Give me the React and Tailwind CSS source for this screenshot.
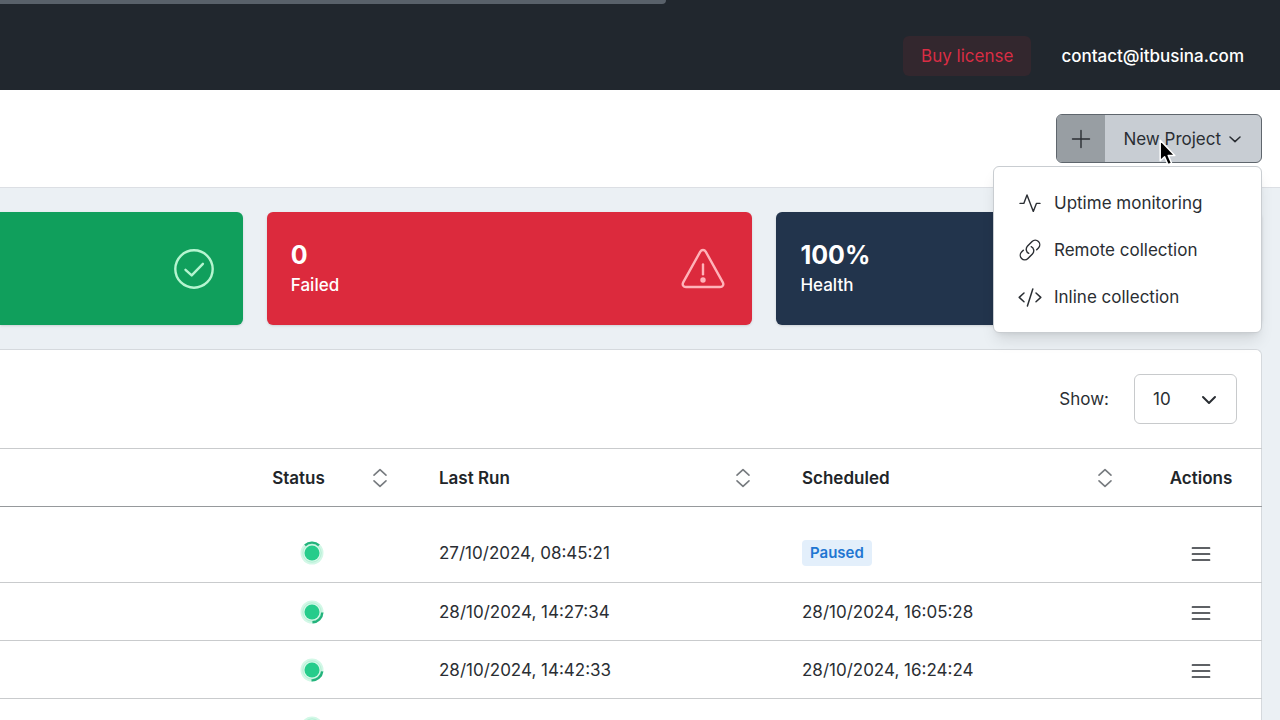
import { useState } from 'react';

const projects = [
  { lastRun: '27/10/2024, 08:45:21', scheduled: null, spin: 0 },
  { lastRun: '28/10/2024, 14:27:34', scheduled: '28/10/2024, 16:05:28', spin: 135 },
  { lastRun: '28/10/2024, 14:42:33', scheduled: '28/10/2024, 16:24:24', spin: 140 },
  { lastRun: '28/10/2024, 16:17:18', scheduled: '28/10/2024, 17:17:20', spin: 180 },
];

function Icon({ size = 24, stroke = 1.5, viewBox = '0 0 24 24', className, children }) {
  return (
    <svg
      width={size}
      height={size}
      viewBox={viewBox}
      fill="none"
      stroke="currentColor"
      strokeWidth={stroke}
      strokeLinecap="round"
      strokeLinejoin="round"
      className={className}
      aria-hidden="true"
    >
      {children}
    </svg>
  );
}

function SortIcon() {
  return (
    <Icon size={22} viewBox="0 0 22 22" stroke={1.6} className="shrink-0 text-[#777b7f]">
      <path d="M5 8.2 11 2.6l6 5.6M5 13.8l6 5.6 6-5.6" />
    </Icon>
  );
}

function StatusDot({ spin }) {
  return (
    <svg width="26" height="26" viewBox="0 0 26 26" className="mx-auto" role="img" aria-label="Success">
      <circle cx="13" cy="13" r="11.5" fill="#d3f8e7" />
      <circle cx="13" cy="13" r="9.2" fill="none" stroke="#b4efd5" strokeWidth="1" />
      <circle cx="13" cy="13" r="7.5" fill="#26cc8b" />
      <path
        d="M6 5.4a10.3 10.3 0 0 1 14 0"
        fill="none"
        stroke="#23b37c"
        strokeWidth="2.4"
        transform={`rotate(${spin} 13 13)`}
      />
    </svg>
  );
}

function StatCard({ value, label, color, children }) {
  return (
    <div className={`flex items-center justify-between rounded-md px-6 h-[113px] shadow-sm ${color}`}>
      <div className="text-white">
        <div className="text-[25px] leading-8 font-bold">{value}</div>
        <div className="text-[17px] leading-7 font-medium">{label}</div>
      </div>
      {children}
    </div>
  );
}

function MenuItem({ label, children }) {
  return (
    <button type="button" role="menuitem" className="flex w-full items-center gap-3 px-6 h-[47px] text-left hover:bg-gray-50">
      {children}
      {label}
    </button>
  );
}

function NewProject() {
  const [open, setOpen] = useState(true);

  return (
    <div className="relative">
      <div className="flex h-[49px] overflow-hidden rounded-md border border-[#5f666d] bg-[#c8cdd3]">
        <button type="button" aria-label="Add" className="flex w-12 items-center justify-center bg-[#989ea3]">
          <Icon size={24} stroke={1.4}>
            <path d="M12 3.5v17M3.5 12h17" />
          </Icon>
        </button>
        <button
          type="button"
          aria-expanded={open}
          onClick={() => setOpen(!open)}
          className="flex items-center gap-2 pl-[18px] pr-5"
        >
          New Project
          <Icon size={12} stroke={1.5} viewBox="0 0 12 12">
            <path d="M1 4l5 4.6L11 4" />
          </Icon>
        </button>
      </div>

      {open && (
        <div role="menu" className="absolute right-0 top-[52px] z-10 w-[269px] rounded-md border border-[#c9cdd1] bg-white py-3 shadow-lg">
          <MenuItem label="Uptime monitoring">
            <Icon stroke={1.4}>
              <path d="M2 12.4h3.8L9 4l6.3 16.4 3.1-8H22" />
            </Icon>
          </MenuItem>
          <MenuItem label="Remote collection">
            <Icon stroke={1.4}>
              <path d="M13.19 8.688a4.5 4.5 0 0 1 1.242 7.244l-4.5 4.5a4.5 4.5 0 0 1-6.364-6.364l1.757-1.757m13.35-.622 1.757-1.757a4.5 4.5 0 0 0-6.364-6.364l-4.5 4.5a4.5 4.5 0 0 0 1.242 7.244" />
            </Icon>
          </MenuItem>
          <MenuItem label="Inline collection">
            <Icon stroke={1.5}>
              <path d="M18 8l4.8 4.4L18 16.8M6 8l-4.8 4.4L6 16.8M14.8 4 9.4 21" />
            </Icon>
          </MenuItem>
        </div>
      )}

      {/* Pointer */}
      <svg width="18" height="28" viewBox="0 0 18 28" className="pointer-events-none absolute left-[103px] top-[25px] z-20" aria-hidden="true">
        <path
          d="M1.2 1.2v20.6l4.4-4.1 3.4 8 3.6-1.5-3.4-7.8h6.6z"
          fill="#000"
          stroke="#fff"
          strokeWidth="1.5"
          strokeLinejoin="round"
        />
      </svg>
    </div>
  );
}

export default function App() {
  const [pageSize, setPageSize] = useState('10');

  return (
    <div className="flex h-screen flex-col overflow-hidden bg-[#ebf0f4] font-['Inter',sans-serif] text-[17px] leading-6 text-[#2a2e33]">
      {/* Top bar */}
      <header className="shrink-0 bg-[#21272e]">
        <div className="h-1 w-[52%] rounded-br bg-[#59616a]"></div>
        <div className="flex items-center justify-end gap-[30px] px-9 pt-8 pb-[14px]">
          <a href="#license" className="rounded-md bg-[#33272e] px-[18px] py-2 text-[#d92d44]">Buy license</a>
          <a href="#account" className="font-medium text-white">contact@itbusina.com</a>
        </div>
      </header>

      {/* Page actions */}
      <div className="relative z-10 flex shrink-0 justify-end border-b border-[#dcdfe4] bg-white px-[18px] py-6">
        <NewProject />
      </div>

      <main className="flex flex-col gap-6 pt-6 pr-[18px]">
        <div className="grid grid-cols-[1fr_2fr_2fr] gap-6">
          <div className="flex h-[113px] items-center justify-end rounded-r-md bg-[#109f5c] pr-6 shadow-sm">
            <Icon size={50} viewBox="0 0 50 50" stroke={2.4} className="text-[#b5f5d0]">
              <circle cx="25" cy="25" r="18.7" />
              <path d="M16.5 25.8l6.2 5.6 11.2-11.6" />
            </Icon>
          </div>
          <StatCard value="0" label="Failed" color="bg-[#dc2a3d]">
            <Icon size={50} viewBox="0 0 50 50" stroke={2.4} className="text-[#ffb3b9]">
              <path d="M22.3 7.6 5.2 38.4c-1.3 2.4.2 4.6 2.8 4.6h34c2.6 0 4.1-2.2 2.8-4.6L27.7 7.6c-1.3-2.1-4.1-2.1-5.4 0z" />
              <path d="M25 20.5v9.8" />
              <circle cx="25" cy="36" r="1.5" fill="currentColor" />
            </Icon>
          </StatCard>
          <StatCard value="100%" label="Health" color="bg-[#22344c]" />
        </div>

        <section className="rounded-tr-md border-t border-r border-[#d5d9dd] bg-white">
          <div className="flex items-center justify-end gap-[25px] px-6 py-6">
            <label htmlFor="page-size">Show:</label>
            <div className="relative">
              <select
                id="page-size"
                value={pageSize}
                onChange={(e) => setPageSize(e.target.value)}
                className="h-[50px] w-[103px] appearance-none rounded-md border border-[#c8cacc] bg-white pl-[18px]"
              >
                <option>10</option>
                <option>25</option>
                <option>50</option>
              </select>
              <Icon size={16} viewBox="0 0 16 16" stroke={2} className="pointer-events-none absolute right-5 top-[18px]">
                <path d="M2 5l6 6 6-6" />
              </Icon>
            </div>
          </div>

          <table className="w-full table-fixed border-collapse">
            <thead>
              <tr className="h-[58px] border-t border-b border-t-[#c9cbcd] border-b-[#96999c] text-[#212529]">
                <th className="w-[208px]"></th>
                <th className="w-[207px] px-6 font-semibold">
                  <div className="flex items-center gap-1">
                    <span className="flex-1 text-center">Status</span>
                    <SortIcon />
                  </div>
                </th>
                <th className="w-[363px] px-6 font-semibold">
                  <div className="flex items-center justify-between">Last Run<SortIcon /></div>
                </th>
                <th className="w-[362px] px-6 font-semibold">
                  <div className="flex items-center justify-between">Scheduled<SortIcon /></div>
                </th>
                <th className="w-[122px] font-semibold">Actions</th>
              </tr>
            </thead>
            <tbody>
              {projects.map((p, i) => (
                <tr key={p.lastRun} className={`border-b border-[#c9cbcd] ${i === 0 ? 'h-[76px] [&>td]:pt-4' : 'h-[58px]'}`}>
                  <td></td>
                  <td><StatusDot spin={p.spin} /></td>
                  <td className="px-6">{p.lastRun}</td>
                  <td className="px-6">
                    {p.scheduled ?? (
                      <span className="inline-block rounded-sm bg-[#e3effb] px-2 py-px text-[15px] font-semibold text-[#2176d2]">Paused</span>
                    )}
                  </td>
                  <td className="text-center">
                    <button type="button" aria-label="Actions" className="align-middle">
                      <Icon size={20} viewBox="0 0 20 20" stroke={1.7}>
                        <path d="M1.5 4h17M1.5 10h17M1.5 16h17" />
                      </Icon>
                    </button>
                  </td>
                </tr>
              ))}
            </tbody>
          </table>
        </section>
      </main>
    </div>
  );
}
